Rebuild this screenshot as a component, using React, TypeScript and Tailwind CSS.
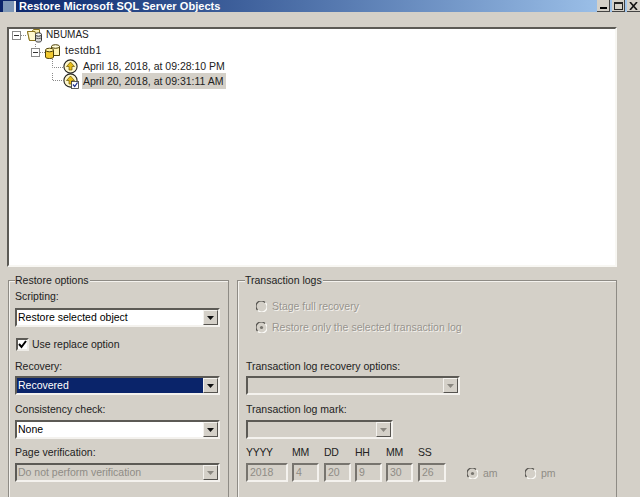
import React from "react";

function Arrow({ off }: { off?: boolean }) {
  return (
    <svg width="7" height="4" viewBox="0 0 7 4">
      <path d="M0 0H7L3.5 4Z" fill={off ? "#8a8780" : "#111"} />
    </svg>
  );
}

function Combo({ text, off, sel, w }: { text?: string; off?: boolean; sel?: boolean; w: string }) {
  return (
    <div
      className={`${w} h-[19px] flex items-stretch border-2 border-t-[#5c5a55] border-l-[#5c5a55] border-r-[#f4f2ee] border-b-[#f4f2ee] ${off ? "bg-[#d4d0c8]" : "bg-white"}`}
    >
      <div className="flex-1 min-w-0 flex items-center">
        <span
          className={`flex-1 h-[15px] leading-[15px] pl-px whitespace-nowrap ${off ? "text-[#8f8c86]" : sel ? "bg-[#0a246a] text-white" : "text-black"}`}
        >
          {text}
        </span>
      </div>
      <div className="w-[15px] bg-[#d4d0c8] flex items-center justify-center border border-t-[#f4f2ee] border-l-[#f4f2ee] border-r-[#55534f] border-b-[#55534f]">
        <Arrow off={off} />
      </div>
    </div>
  );
}

function Radio({ on }: { on?: boolean }) {
  return (
    <svg width="11" height="11" viewBox="0 0 11 11" className="shrink-0">
      <circle cx="5.5" cy="5.5" r="5" fill="#d4d0c8" />
      <path d="M1.5 9A5 5 0 0 1 9 1.5" fill="none" stroke="#55534f" strokeWidth="1.2" />
      <path d="M9.5 2A5 5 0 0 1 2 9.5" fill="none" stroke="#fbfaf7" strokeWidth="1.2" />
      {on && <circle cx="5.5" cy="5.5" r="1.6" fill="#77746e" />}
    </svg>
  );
}

function Box({ x, y }: { x: number; y: number }) {
  return (
    <g>
      <rect x={x + 0.5} y={y + 0.5} width="8" height="8" fill="#fff" stroke="#8a8a8a" />
      <path d={`M${x + 2} ${y + 4.5}H${x + 7}`} stroke="#333" />
    </g>
  );
}

function FolderDb() {
  return (
    <g>
      <path d="M0.5 3.5H5L6.5 1.5H12.5V12.5H2.5Z" fill="#fbeeb0" stroke="#8a7420" />
      <path d="M0.5 3.5H8L10 12.5H2.5Z" fill="#fff8d0" stroke="#8a7420" />
      <path d="M8.5 6.5V12.5C8.5 14.6 14.5 14.6 14.5 12.5V6.5" fill="#d8d8d8" stroke="#333" />
      <ellipse cx="11.5" cy="6.5" rx="3" ry="1.7" fill="#f5f5f5" stroke="#333" />
      <path d="M8.5 9.5C9.5 11 13.5 11 14.5 9.5" fill="none" stroke="#555" />
    </g>
  );
}

function Cans() {
  return (
    <g>
      <path d="M6.5 2.5V11.5H14.5V2.5" fill="#fff5b5" stroke="#4e4108" />
      <ellipse cx="10.5" cy="2.5" rx="4" ry="1.8" fill="#fffbd8" stroke="#4e4108" />
      <path d="M0.5 6V13C0.5 15 8.5 15 8.5 13V6" fill="#f2c92e" stroke="#4e4108" />
      <ellipse cx="4.5" cy="6" rx="4" ry="1.8" fill="#fff3a8" stroke="#4e4108" />
    </g>
  );
}

function Clock({ check }: { check?: boolean }) {
  return (
    <g>
      <circle cx="7.5" cy="7.5" r="6.6" fill="#fdf6cc" stroke="#222" strokeWidth="1.1" />
      <path d="M7.5 3L11.5 7.5H9V11H6V7.5H3.5Z" fill="#e8bd17" stroke="#6b5700" strokeWidth=".7" />
      {check && (
        <g>
          <rect x="8.5" y="8.5" width="7" height="7" fill="#fff" stroke="#333" strokeWidth=".8" />
          <path d="M10 11.5L11.7 13.5L14.5 9.5" fill="none" stroke="#1d2f8f" strokeWidth="1.3" />
        </g>
      )}
    </g>
  );
}

const dots = "#8a8a8a";

function Field({ label, value, w }: { label: string; value: string; w: string }) {
  return (
    <div className={`${w} shrink-0`}>
      <div className="h-[15px] leading-[15px] whitespace-nowrap tracking-[-0.3px]">{label}</div>
      <div className="mt-[3px] h-[19px] border-2 border-t-[#77746e] border-l-[#77746e] border-r-[#f4f2ee] border-b-[#f4f2ee] text-[#8f8c86] leading-[15px] pl-[2px]">
        {value}
      </div>
    </div>
  );
}

export default function App() {
  return (
    <div className="w-[640px] h-[497px] overflow-hidden bg-[#d4d0c8] text-[10.5px] text-[#222] font-['Liberation_Sans',sans-serif]">
      <div className="h-[12px] flex items-center overflow-hidden bg-gradient-to-r from-[#0a246a] to-[#a6caf0]">
        <div className="w-[13px] h-[11px] ml-[3px] bg-[#7e98b8] border-r-2 border-[#e8e8e8]" />
        <span className="ml-[3px] text-white font-bold text-[11px] leading-[12px] tracking-[0.05px] whitespace-nowrap">
          Restore Microsoft SQL Server Objects
        </span>
        <div className="ml-auto flex gap-[2px] h-[12px]">
          <div className="w-[13px] bg-[#d4d0c8] border-b border-r border-[#444] flex items-end justify-center pb-[2px]">
            <div className="w-[7px] h-[2px] bg-black" />
          </div>
          <div className="w-[13px] bg-[#d4d0c8] border-b border-r border-[#444] flex items-center justify-center">
            <div className="w-[9px] h-[8px] border border-t-2 border-[#222]" />
          </div>
          <div className="w-[13px] bg-[#d4d0c8] border-b border-[#444] flex items-center justify-center">
            <svg width="9" height="8" viewBox="0 0 9 8">
              <path d="M1 0L8 8M8 0L1 8" stroke="#111" strokeWidth="1.6" />
            </svg>
          </div>
        </div>
      </div>

      <div className="mt-[15px] mx-[7px] w-[610px] h-[240px] bg-white border-2 border-t-[#5c5a55] border-l-[#5c5a55] border-r-[#f8f7f3] border-b-[#f8f7f3]">
        <div className="-mt-[3px] h-[16px] flex items-center">
          <svg width="37" height="16" viewBox="0 0 37 16" className="shrink-0 overflow-visible">
            <Box x={3} y={5} />
            <path d="M12 9.5H18" stroke={dots} strokeDasharray="1 1" />
            <g transform="translate(18,2)"><FolderDb /></g>
          </svg>
          <span className="text-[10px]">NBUMAS</span>
        </div>
        <div className="mt-px h-[16px] flex items-center">
          <svg width="56" height="16" viewBox="0 0 56 16" className="shrink-0 overflow-visible">
            <path d="M26.5 1V5" stroke={dots} strokeDasharray="1 1" />
            <Box x={22} y={5} />
            <path d="M31 9.5H36" stroke={dots} strokeDasharray="1 1" />
            <g transform="translate(36,1)"><Cans /></g>
          </svg>
          <span className="tracking-[0.3px]">testdb1</span>
        </div>
        <div className="h-[16px] flex items-center">
          <svg width="72" height="16" viewBox="0 0 72 16" className="shrink-0">
            <path d="M43.5 0V8.5H54" stroke={dots} strokeDasharray="1 1" fill="none" />
            <g transform="translate(54,0)"><Clock /></g>
          </svg>
          <span className="ml-[2px]">April 18, 2018, at 09:28:10 PM</span>
        </div>
        <div className="-mt-[2px] h-[16px] flex items-center">
          <svg width="72" height="16" viewBox="0 0 72 16" className="shrink-0">
            <path d="M43.5 0V7.5H54" stroke={dots} strokeDasharray="1 1" fill="none" />
            <g transform="translate(54,0)"><Clock check /></g>
          </svg>
          <span className="ml-px pl-px pr-[3px] h-[16px] leading-[16px] bg-[#d4d0c8]">
            April 20, 2018, at 09:31:11 AM
          </span>
        </div>
      </div>

      <div className="mt-[6px] ml-[8px] flex gap-[8px] items-start">
        <fieldset className="w-[221px] h-[240px] shrink-0 border border-[#8e8b85] shadow-[inset_1px_1px_0_#f4f2ee] px-[6px]">
          <legend className="h-[14px] leading-[14px] bg-[#d4d0c8] pr-px">Restore options</legend>
          <div className="h-[15px] leading-[15px] mt-[2px]">Scripting:</div>
          <div className="mt-[4px]"><Combo w="w-[205px]" text="Restore selected object" /></div>
          <div className="mt-[11px] h-[13px] flex items-center">
            <div className="w-[13px] h-[13px] ml-px bg-white border-2 border-t-[#5c5a55] border-l-[#5c5a55] border-r-[#eeece7] border-b-[#eeece7] flex items-center justify-center">
              <svg width="9" height="9" viewBox="0 0 9 9">
                <path d="M1 4L3.5 7L8 1" fill="none" stroke="#000" strokeWidth="2" />
              </svg>
            </div>
            <span className="ml-[3px]">Use replace option</span>
          </div>
          <div className="h-[15px] leading-[15px] mt-[8px]">Recovery:</div>
          <div className="mt-[2px]"><Combo w="w-[205px]" text="Recovered" sel /></div>
          <div className="h-[15px] leading-[15px] mt-[7px]">Consistency check:</div>
          <div className="mt-[3px]"><Combo w="w-[205px]" text="None" /></div>
          <div className="h-[15px] leading-[15px] mt-[6px]">Page verification:</div>
          <div className="mt-[3px]"><Combo w="w-[205px]" text="Do not perform verification" off /></div>
        </fieldset>

        <fieldset className="w-[380px] h-[240px] shrink-0 border border-[#8e8b85] shadow-[inset_1px_1px_0_#f4f2ee] px-[8px]">
          <legend className="-ml-px h-[14px] leading-[14px] bg-[#d4d0c8] pr-px">Transaction logs</legend>
          <div className="mt-[12px] ml-[10px] h-[15px] flex items-center gap-[5px] text-[#97948e] [text-shadow:1px_1px_0_#f4f2ee]">
            <Radio />
            <span>Stage full recovery</span>
          </div>
          <div className="mt-[6px] ml-[10px] h-[15px] flex items-center gap-[5px] text-[#97948e] [text-shadow:1px_1px_0_#f4f2ee]">
            <Radio on />
            <span>Restore only the selected transaction log</span>
          </div>
          <div className="h-[15px] leading-[15px] mt-[24px]">Transaction log recovery options:</div>
          <div className="mt-[2px]"><Combo w="w-[214px]" off /></div>
          <div className="h-[15px] leading-[15px] mt-[7px]">Transaction log mark:</div>
          <div className="mt-[3px]"><Combo w="w-[147px]" off /></div>
          <div className="mt-[6px] flex items-start">
            <Field w="w-[42px] mr-[4px]" label="YYYY" value="2018" />
            <Field w="w-[27px] mr-[5px]" label="MM" value="4" />
            <Field w="w-[27px] mr-[4px]" label="DD" value="20" />
            <Field w="w-[27px] mr-[4px]" label="HH" value="9" />
            <Field w="w-[27px] mr-[5px]" label="MM" value="30" />
            <Field w="w-[28px]" label="SS" value="26" />
            <div className="ml-[21px] mt-[21px] w-[58px] flex items-center gap-[5px] text-[#8f8c86]">
              <Radio on />
              <span>am</span>
            </div>
            <div className="mt-[21px] flex items-center gap-[5px] text-[#8f8c86]">
              <Radio />
              <span>pm</span>
            </div>
          </div>
        </fieldset>
      </div>
    </div>
  );
}
